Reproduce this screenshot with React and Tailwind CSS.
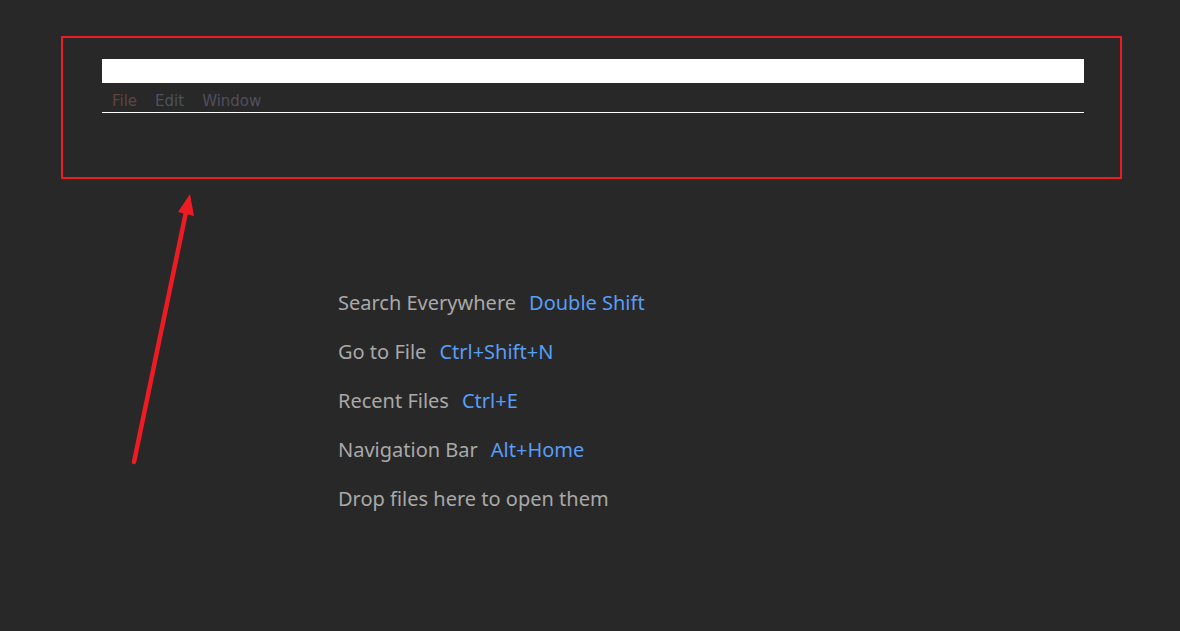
import React from "react";

const rows = [
  ["Search Everywhere", "Double Shift"],
  ["Go to File", "Ctrl+Shift+N"],
  ["Recent Files", "Ctrl+E"],
  ["Navigation Bar", "Alt+Home"],
  ["Drop files here to open them", ""],
];

export default function App() {
  return (
    <div className="relative w-[1180px] h-[631px] overflow-hidden bg-[#282828]" style={{ fontFamily: '"Noto Sans", "Open Sans", sans-serif' }}>
      <div className="pt-[36px] pl-[61px]">
        <div className="w-[1061px] h-[143px] border-2 border-[#ed1c24] pl-[39px] pt-[21px]">
          <div className="w-[982px] h-[24px] bg-white" />
          <div className="w-[982px] h-[30px] border-b border-white flex items-center gap-[18px] pl-[10px] text-[15px] leading-none pt-[7px]" style={{ fontFamily: '"DejaVu Sans", sans-serif' }}>
            <span className="text-[#5e4640]">File</span>
            <span className="text-[#4a5260]">Edit</span>
            <span className="text-[#534e60]">Window</span>
          </div>
        </div>
      </div>

      <div className="pl-[338px] pt-[110px] flex flex-col gap-[21px]">
        {rows.map(([a, b]) => (
          <div key={a} className="h-[28px] flex items-center text-[20px] leading-none whitespace-nowrap">
            <span className="text-[#a9a9a9]">{a}</span>
            {b && <span className="ml-[13px] text-[#589df6]">{b}</span>}
          </div>
        ))}
      </div>

      <svg className="absolute left-0 top-0 pointer-events-none" width="1180" height="631">
        <line x1="134" y1="462" x2="186" y2="212" stroke="#ed1c24" strokeWidth="4.5" strokeLinecap="round" />
        <polygon points="190,194 194,216 178,212" fill="#ed1c24" />
      </svg>
    </div>
  );
}
